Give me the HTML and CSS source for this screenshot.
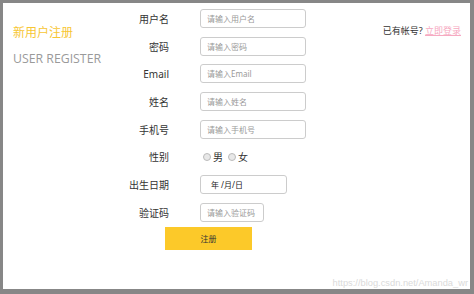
FILE: index.html
```html
<!DOCTYPE html>
<html lang="zh">
<head>
  <meta charset="UTF-8">
  <title>新用户注册</title>
  <link rel="stylesheet" href="styles.css">
</head>
<body>
<div class="frame">
  <div class="side">
    <div class="title">新用户注册</div>
    <div class="sub">USER REGISTER</div>
  </div>

  <div class="form">
    <div class="fields">
      <label class="label">用户名</label>
      <input class="input-field" type="text" placeholder="请输入用户名">
      <label class="label">密码</label>
      <input class="input-field" type="password" placeholder="请输入密码">
      <label class="label">Email</label>
      <input class="input-field" type="text" placeholder="请输入Email">
      <label class="label">姓名</label>
      <input class="input-field" type="text" placeholder="请输入姓名">
      <label class="label">手机号</label>
      <input class="input-field" type="text" placeholder="请输入手机号">
      <label class="label">性别</label>
      <div class="radios">
        <span class="radio"></span><span class="radio-text">男</span>
        <span class="radio"></span><span class="radio-text">女</span>
      </div>
      <label class="label">出生日期</label>
      <div class="input-field date-field">年 /月/日</div>
      <label class="label">验证码</label>
      <input class="input-field code-field" type="text" placeholder="请输入验证码">
    </div>
    <button class="button">注册</button>
  </div>

  <div class="login">已有帐号? <a href="#" class="login-link">立即登录</a></div>

  <div class="watermark">https://blog.csdn.net/Amanda_wr</div>
</div>
</body>
</html>
```

FILE: styles.css
```css
body {
  margin: 0;
  font-family: "Noto Sans", "Noto Sans CJK SC", sans-serif;
  background: #fff;
}
.frame {
  position: relative;
  display: flex;
  width: 474px;
  height: 294px;
  box-sizing: border-box;
  border: 3px solid #878787;
  border-right-width: 4px;
  border-bottom-width: 5px;
  background: #fff;
  overflow: hidden;
}
.side {
  width: 116px;
  padding: 23px 0 0 10px;
  box-sizing: border-box;
}
.title {
  font-size: 12px;
  line-height: 14px;
  color: #f7c633;
}
.sub {
  margin-top: 12px;
  font-family: "Open Sans", sans-serif;
  font-size: 12.3px;
  line-height: 14px;
  color: #9a9a9a;
}
.form {
  padding-top: 6px;
}
.fields {
  display: grid;
  grid-template-columns: 50px 106px;
  grid-auto-rows: 19px;
  column-gap: 31px;
  row-gap: 8.7px;
  align-items: center;
}
.label {
  text-align: right;
  font-size: 10px;
  color: #333;
}
.input-field {
  width: 100%;
  height: 19px;
  box-sizing: border-box;
  padding: 0 0 0 6px;
  border: 1px solid #ccc;
  border-radius: 3px;
  font-family: "Noto Sans", "Noto Sans CJK SC", sans-serif;
  font-size: 8px;
  color: #333;
  outline: none;
}
.input-field::placeholder {
  color: #999;
}
.date-field {
  width: 87px;
  padding-left: 10px;
  line-height: 17px;
  font-size: 8px;
  color: #222;
}
.code-field {
  width: 64px;
}
.radios {
  display: flex;
  align-items: center;
  padding-left: 3px;
  font-size: 10px;
  color: #333;
}
.radio {
  width: 6px;
  height: 6px;
  margin: 0 2px 0 0;
  border: 1px solid #bbb;
  border-radius: 50%;
  background: #e8e8e8;
}
.radio-text {
  margin-right: 5px;
}
.button {
  display: block;
  width: 87px;
  height: 23px;
  margin: 5px 0 0 46px;
  padding: 0;
  border: none;
  background: #fcc929;
  font-family: "Noto Sans", "Noto Sans CJK SC", sans-serif;
  font-size: 8px;
  color: #333;
  cursor: pointer;
}
.login {
  margin-left: auto;
  padding: 22px 9px 0 0;
  font-size: 9px;
  line-height: 12px;
  color: #333;
}
.login-link {
  color: #f6a9c1;
}
.watermark {
  position: absolute;
  right: 2px;
  bottom: 1px;
  font-family: "Liberation Sans", sans-serif;
  font-size: 9.3px;
  color: #dadada;
  white-space: nowrap;
}
```
